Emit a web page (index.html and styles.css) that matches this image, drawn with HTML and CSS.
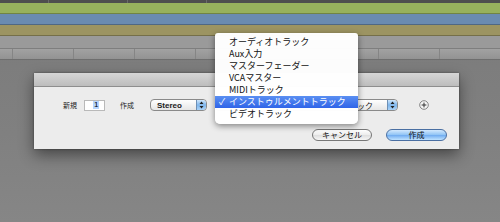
FILE: index.html
```html
<!DOCTYPE html>
<html>
<head>
<meta charset="utf-8">
<link rel="stylesheet" href="styles.css">
</head>
<body>
<div class="tracks">
  <div class="topbar"><span class="split s1"></span><span class="split s2"></span><span class="split s3"></span></div>
  <div class="band green"></div>
  <div class="band blue"></div>
  <div class="band olive"></div>
  <div class="lane"></div>
  <div class="ruler"><span class="tick"></span><span class="tick"></span><span class="tick"></span><span class="tick"></span><span class="tick"></span><span class="tick"></span><span class="tick"></span><span class="tick"></span></div>
</div>
<div class="dialog">
  <div class="titlebar"></div>
  <div class="dbody">
    <div class="row">
      <span class="label l1">新規</span>
      <span class="numfield"><span class="sel">1</span></span>
      <span class="label l2">作成</span>
      <span class="popup stereo"><span class="ptext">Stereo</span><span class="arrows"><svg width="5" height="8" viewBox="0 0 5 8"><path d="M0.5 3 L2.5 0.5 L4.5 3 Z M0.5 5 L2.5 7.5 L4.5 5 Z" fill="#222"/></svg></span></span>
      <span class="popup kind"><span class="clip"><span class="ktext">インストゥルメントトラック</span></span><span class="arrows"><svg width="5" height="8" viewBox="0 0 5 8"><path d="M0.5 3 L2.5 0.5 L4.5 3 Z M0.5 5 L2.5 7.5 L4.5 5 Z" fill="#222"/></svg></span></span>
      <span class="plus"><svg width="10" height="10" viewBox="0 0 10 10"><circle cx="5" cy="5" r="4.3" fill="#f4f4f4" stroke="#777" stroke-width="0.9"/><path d="M5 2.6 V7.4 M2.6 5 H7.4" stroke="#333" stroke-width="1"/></svg></span>
    </div>
    <div class="buttons">
      <span class="btn cancel">キャンセル</span>
      <span class="btn ok">作成</span>
    </div>
  </div>
</div>
<div class="menu">
  <div class="item">オーディオトラック</div>
  <div class="item">Aux入力</div>
  <div class="item">マスターフェーダー</div>
  <div class="item">VCAマスター</div>
  <div class="item">MIDIトラック</div>
  <div class="item active"><span class="check">✓</span>インストゥルメントトラック</div>
  <div class="item">ビデオトラック</div>
</div>
</body>
</html>
```
FILE: styles.css
```css
html, body {
  margin: 0;
  padding: 0;
}
body {
  width: 500px;
  height: 222px;
  overflow: hidden;
  position: relative;
  background: linear-gradient(#7a7a7a, #808080 60%, #868686);
  font-family: "Noto Sans CJK JP", "Noto Sans", sans-serif;
}
.tracks {
  display: flex;
  flex-direction: column;
}
.topbar {
  height: 3px;
  background: #4e4e4e;
  position: relative;
}
.split {
  position: absolute;
  top: 0;
  width: 1px;
  height: 3px;
  background: #6a6a6a;
}
.s1 { left: 48px; }
.s2 { left: 127px; }
.s3 { left: 206px; }
.band {
  border-bottom: 1px solid rgba(0,0,0,0.25);
}
.green { height: 10px; background: #97b15d; }
.blue { height: 10px; background: #6a8bb1; }
.olive { height: 10px; background: #9c9462; }
.lane {
  height: 12px;
  background: #9a9a9a;
  border-bottom: 1px solid #7e7e7e;
}
.ruler {
  height: 10px;
  background: linear-gradient(#a2a2a2, #939393);
  border-bottom: 1px solid #6e6e6e;
  display: flex;
  padding-left: 12px;
}
.tick {
  width: 60px;
  flex: none;
  border-left: 1px solid #858585;
}
.dialog {
  margin-left: 34px;
  margin-top: 13px;
  width: 425px;
  height: 76px;
  background: #ececec;
  box-shadow: 0 6px 14px rgba(0,0,0,0.45), 0 0 2px rgba(0,0,0,0.4);
  display: flex;
  flex-direction: column;
}
.titlebar {
  height: 13px;
  background: linear-gradient(#d6d6d6, #bdbdbd);
  border-bottom: 1px solid #8e8e8e;
}
.dbody {
  display: flex;
  flex-direction: column;
  padding-top: 12px;
}
.row {
  display: flex;
  align-items: center;
  height: 12px;
}
.label {
  font-size: 7px;
  color: #222;
  line-height: 12px;
}
.l1 { margin-left: 29px; }
.numfield {
  margin-left: 7px;
  width: 21px;
  height: 11px;
  background: #fff;
  border: 1px solid #b9b9b9;
  box-sizing: border-box;
  display: flex;
  align-items: center;
  padding-left: 8px;
}
.sel {
  font-family: "Liberation Sans", sans-serif;
  font-size: 8px;
  line-height: 8px;
  background: #b5d5ff;
  padding: 0 1px;
  color: #000;
}
.l2 { margin-left: 15px; }
.popup {
  height: 12px;
  box-sizing: border-box;
  border: 1px solid #8a8a8a;
  border-radius: 4px;
  background: linear-gradient(#ffffff, #e6e6e6);
  display: flex;
  align-items: center;
  overflow: hidden;
}
.stereo {
  margin-left: 16px;
  width: 57px;
}
.kind {
  margin-left: 8px;
  width: 183px;
  justify-content: flex-end;
}
.ptext {
  flex: 1;
  font-family: "Liberation Sans", sans-serif;
  font-size: 8px;
  font-weight: bold;
  color: #222;
  padding-left: 6px;
  white-space: nowrap;
}
.clip {
  flex: none;
  width: 14px;
  margin-right: 14px;
  overflow: hidden;
  display: flex;
  justify-content: flex-end;
}
.ktext {
  flex: none;
  font-size: 8px;
  color: #222;
  white-space: nowrap;
}
.arrows {
  width: 9px;
  height: 10px;
  flex: none;
  border-radius: 0 3px 3px 0;
  background: linear-gradient(#cfe6fb, #7fb6ec 50%, #a9d2f7);
  border-left: 1px solid #6e90b5;
  display: flex;
  align-items: center;
  justify-content: center;
}
.plus {
  margin-left: 21px;
  width: 10px;
  height: 10px;
  display: flex;
}
.buttons {
  display: flex;
  margin-top: 18px;
  padding-left: 278px;
  gap: 14px;
}
.btn {
  width: 60px;
  height: 12px;
  box-sizing: border-box;
  border-radius: 6px;
  font-size: 8px;
  line-height: 10px;
  text-align: center;
  color: #111;
}
.cancel {
  border: 1px solid #777;
  background: linear-gradient(#ffffff, #ececec 50%, #dedede 51%, #f6f6f6);
}
.ok {
  width: 61px;
  border: 1px solid #4a6fa2;
  background: linear-gradient(#d2e8fd, #8ec3f5 50%, #6eaaf0 51%, #bfe3ff);
}
.menu {
  position: absolute;
  left: 215px;
  top: 33px;
  width: 143px;
  padding: 3px 0 4px;
  background: rgba(255,255,255,0.98);
  border-radius: 3px 3px 5px 5px;
  box-shadow: 0 2px 6px rgba(0,0,0,0.45);
  box-sizing: border-box;
}
.item {
  height: 12px;
  line-height: 12px;
  font-size: 9px;
  color: #111;
  padding-left: 14px;
  position: relative;
  white-space: nowrap;
}
.item.active {
  background: linear-gradient(#5a8ff2, #2f64e8);
  color: #fff;
}
.check {
  position: absolute;
  left: 4px;
  top: 0;
  font-size: 9px;
}
```
